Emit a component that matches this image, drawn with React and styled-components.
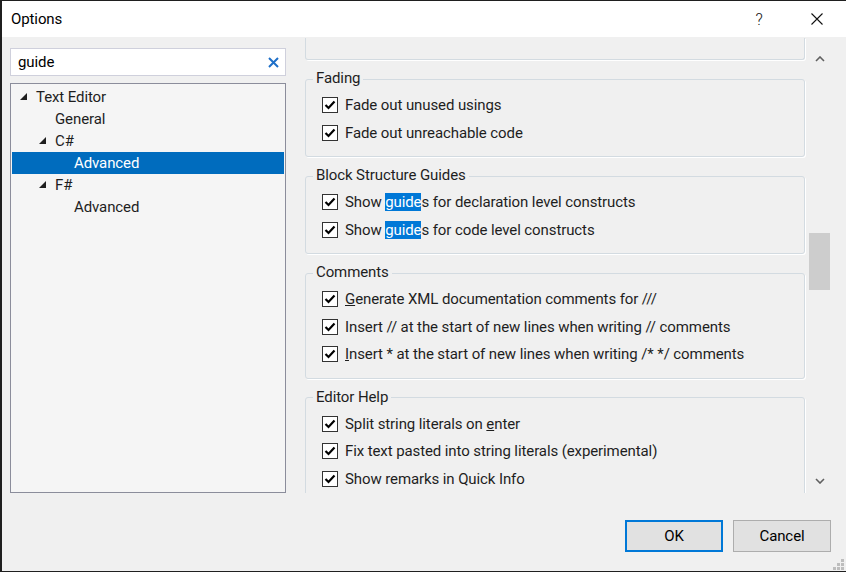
import React from "react";
import styled, { createGlobalStyle } from "styled-components";

const GlobalStyle = createGlobalStyle`
  html, body { margin: 0; padding: 0; background: #1f1f1f; }
  body { font-family: "Segoe UI", Roboto, "Noto Sans", sans-serif; color: #000; }
  #root { padding: 1px 0 1px 2px; }
  * { box-sizing: border-box; }
`;

const tree = [
  { label: "Text Editor", level: 0, expanded: true },
  { label: "General", level: 1 },
  { label: "C#", level: 1, expanded: true },
  { label: "Advanced", level: 2, selected: true },
  { label: "F#", level: 1, expanded: true },
  { label: "Advanced", level: 2 },
];

const Hit = ({ children }) => <Highlight>{children}</Highlight>;

const groups = [
  {
    title: "Fading",
    rows: ["Fade out unused usings", "Fade out unreachable code"],
  },
  {
    title: "Block Structure Guides",
    rows: [
      <>Show <Hit>guide</Hit>s for declaration level constructs</>,
      <>Show <Hit>guide</Hit>s for code level constructs</>,
    ],
  },
  {
    title: "Comments",
    rows: [
      <><u>G</u>enerate XML documentation comments for ///</>,
      "Insert // at the start of new lines when writing // comments",
      <><u>I</u>nsert * at the start of new lines when writing /* */ comments</>,
    ],
  },
  {
    title: "Editor Help",
    rows: [
      <>Split string literals on <u>e</u>nter</>,
      "Fix text pasted into string literals (experimental)",
      "Show remarks in Quick Info",
    ],
  },
];

const Chevron = ({ down }) => (
  <svg width="10" height="6" viewBox="0 0 10 6">
    <path
      d={down ? "M1 1 L5 5 L9 1" : "M1 5 L5 1 L9 5"}
      fill="none"
      stroke="#606060"
      strokeWidth="1.6"
    />
  </svg>
);

export default function App() {
  return (
    <>
      <GlobalStyle />
      <Dialog>
        <TitleBar>
          <TitleText>Options</TitleText>
          <CaptionButton>?</CaptionButton>
          <CaptionButton>
            <svg width="12" height="12" viewBox="0 0 12 12">
              <path d="M0.5 0.5 L11.5 11.5 M11.5 0.5 L0.5 11.5" stroke="#111" strokeWidth="1.1" />
            </svg>
          </CaptionButton>
        </TitleBar>

        <Main>
          <LeftPane>
            <SearchBox>
              <SearchText>guide</SearchText>
              <svg width="11" height="11" viewBox="0 0 11 11">
                <path d="M1 1 L10 10 M10 1 L1 10" stroke="#1e6fc8" strokeWidth="2" />
              </svg>
            </SearchBox>
            <Tree>
              {tree.map((node, i) => (
                <TreeRow key={i} level={node.level} selected={node.selected}>
                  <Twisty>
                    {node.expanded && (
                      <svg width="7" height="7" viewBox="0 0 7 7">
                        <polygon points="7,0 7,7 0,7" fill={node.selected ? "#fff" : "#1e1e1e"} />
                      </svg>
                    )}
                  </Twisty>
                  {node.label}
                </TreeRow>
              ))}
            </Tree>
          </LeftPane>

          <RightPane>
            <Viewport>
              {/* tail of the group scrolled above the viewport */}
              <ClippedGroup />
              {groups.map((g) => (
                <Group key={g.title}>
                  <Legend>{g.title}</Legend>
                  {g.rows.map((r, i) => (
                    <OptionRow key={i}>
                      <CheckBox>
                        <svg width="14" height="14" viewBox="0 0 14 14">
                          <path d="M2.5 7 L5.5 10 L11.5 3.5" fill="none" stroke="#000" strokeWidth="2.2" />
                        </svg>
                      </CheckBox>
                      <span>{r}</span>
                    </OptionRow>
                  ))}
                </Group>
              ))}
            </Viewport>
            <ScrollBar>
              <ArrowBox><Chevron /></ArrowBox>
              <Track>
                <Thumb style={{ marginTop: 163, height: 57 }} />
              </Track>
              <ArrowBox><Chevron down /></ArrowBox>
            </ScrollBar>
          </RightPane>
        </Main>

        <Footer>
          <Button primary>OK</Button>
          <Button>Cancel</Button>
        </Footer>

        <Grip>
          <svg width="11" height="11" viewBox="0 0 11 11">
            {[[8, 0], [4, 4], [8, 4], [0, 8], [4, 8], [8, 8]].map(([x, y], i) => (
              <rect key={i} x={x} y={y} width="3" height="3" fill="#bdbdbd" />
            ))}
          </svg>
        </Grip>
      </Dialog>
    </>
  );
}

const Dialog = styled.div`
  position: relative;
  width: 844px;
  height: 570px;
  background: #f0f0f0;
  display: flex;
  flex-direction: column;
  font-size: 15px;
  letter-spacing: -0.1px;
`;

const TitleBar = styled.div`
  height: 36px;
  background: #fff;
  display: flex;
  align-items: center;
  padding-left: 9px;
  flex-shrink: 0;
`;

const TitleText = styled.div`
  flex: 1;
  font-size: 15px;
  color: #000;
`;

const CaptionButton = styled.div`
  width: 58px;
  height: 36px;
  display: flex;
  align-items: center;
  justify-content: center;
  font-size: 16px;
  font-weight: 300;
  color: #111;
`;

const Main = styled.div`
  display: flex;
  height: 456px;
  padding-left: 8px;
  flex-shrink: 0;
`;

const LeftPane = styled.div`
  width: 276px;
  padding-top: 11px;
  display: flex;
  flex-direction: column;
`;

const SearchBox = styled.div`
  height: 28px;
  background: #fff;
  border: 1px solid #cfd0dc;
  display: flex;
  align-items: center;
  padding: 0 6px 0 7px;
`;

const SearchText = styled.span`
  flex: 1;
  font-size: 15px;
`;

const Tree = styled.div`
  margin-top: 7px;
  height: 410px;
  border: 1px solid #8b8d9b;
  background: #f5f5f5;
  padding: 2px 1px 1px;
`;

const TreeRow = styled.div`
  height: 22px;
  display: flex;
  align-items: center;
  padding-left: ${(p) => 8 + p.level * 19}px;
  background: ${(p) => (p.selected ? "#006cbe" : "transparent")};
  color: ${(p) => (p.selected ? "#fff" : "#1e1e1e")};
  font-size: 15px;
`;

const Twisty = styled.span`
  width: 16px;
  height: 22px;
  display: flex;
  align-items: center;
  padding-bottom: 1px;
`;

const RightPane = styled.div`
  margin-left: 19px;
  padding-top: 1px;
  display: flex;
`;

const Viewport = styled.div`
  width: 501px;
  height: 455px;
  overflow: hidden;
  padding-right: 1px;
`;

const Group = styled.fieldset`
  margin: 0 0 9px;
  padding: 2px 0 10px 16px;
  border: 1px solid #d3dbe1;
  border-radius: 3px;
  box-shadow: 1px 1px 0 #fff;
  min-width: 0;
`;

const ClippedGroup = styled(Group)`
  height: 22px;
  padding: 0;
  border-top: none;
  border-radius: 0 0 3px 3px;
`;

const Legend = styled.legend`
  margin-left: -9px;
  padding: 0 3px 2px;
  font-size: 15px;
  line-height: 18px;
  color: #1e1e1e;
`;

const OptionRow = styled.div`
  height: 27.5px;
  display: flex;
  align-items: center;
  gap: 7px;
  font-size: 15px;
  color: #1e1e1e;
  white-space: nowrap;
  padding-top: 1px;
`;

const CheckBox = styled.span`
  width: 16px;
  height: 16px;
  flex-shrink: 0;
  border: 1px solid #333;
  background: #fff;
  display: flex;
  align-items: center;
  justify-content: center;
`;

const Highlight = styled.span`
  background: #0078d7;
  color: #fff;
`;

const ScrollBar = styled.div`
  margin-top: 10px;
  width: 25px;
  height: 444px;
  display: flex;
  flex-direction: column;
  padding-left: 3px;
  padding-right: 1px;
`;

const ArrowBox = styled.div`
  height: 22px;
  display: flex;
  align-items: center;
  justify-content: center;
`;

const Track = styled.div`
  flex: 1;
`;

const Thumb = styled.div`
  background: #cdcdcd;
`;

const Footer = styled.div`
  flex: 1;
  display: flex;
  justify-content: flex-end;
  align-items: flex-start;
  gap: 10px;
  padding: 27px 15px 0 0;
`;

const Button = styled.button`
  width: 98px;
  height: 32px;
  background: #e1e1e1;
  border: ${(p) => (p.primary ? "2px solid #0078d7" : "1px solid #adadad")};
  font-family: inherit;
  font-size: 15px;
  letter-spacing: inherit;
  color: #000;
  padding: 0;
`;

const Grip = styled.div`
  position: absolute;
  right: 2px;
  bottom: 1px;
  line-height: 0;
`;
